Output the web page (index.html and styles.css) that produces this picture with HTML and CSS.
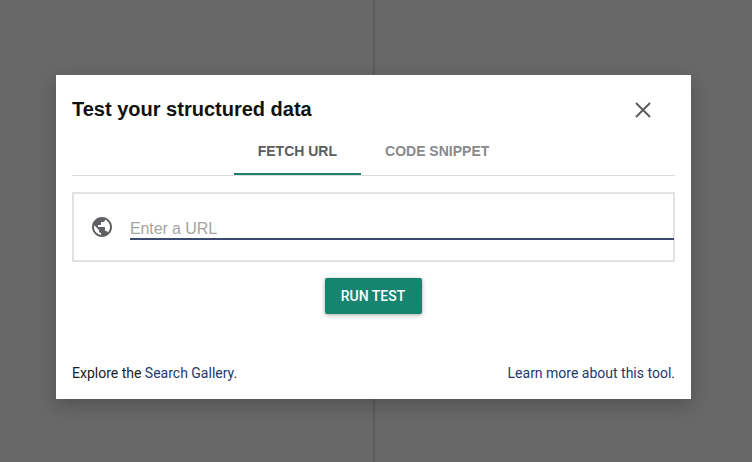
FILE: index.html
```html
<!DOCTYPE html>
<html lang="en">
<head>
    <meta charset="UTF-8">
    <meta name="viewport" content="width=device-width, initial-scale=1.0">
    <title>Test your structured data</title>
    <link rel="stylesheet" href="styles.css">
</head>
<body>
    <div class="dialog">
        <div class="dialog-header">
            <h1>Test your structured data</h1>
            <svg class="close-icon" viewBox="0 0 16 16" width="16" height="16">
                <path d="M1 1L15 15M15 1L1 15" fill="none" stroke="#5a5a5a" stroke-width="1.9"/>
            </svg>
        </div>

        <div class="tabs">
            <div class="tab active">FETCH URL</div>
            <div class="tab">CODE SNIPPET</div>
        </div>

        <div class="url-box">
            <svg class="globe-icon" viewBox="0 0 24 24" width="24" height="24">
                <path fill="#5f6063" d="M12 2C6.48 2 2 6.48 2 12s4.48 10 10 10 10-4.48 10-10S17.52 2 12 2zm-1 17.93c-3.95-.49-7-3.85-7-7.93 0-.62.08-1.21.21-1.79L9 15v1c0 1.1.9 2 2 2v1.93zm6.9-2.54c-.26-.81-1-1.39-1.9-1.39h-1v-3c0-.55-.45-1-1-1H8v-2h2c.55 0 1-.45 1-1V7h2c1.1 0 2-.9 2-2v-.41c2.93 1.19 5 4.06 5 7.41 0 2.08-.8 3.97-2.1 5.39z"/>
            </svg>
            <div class="url-field">Enter a URL</div>
        </div>

        <div class="actions">
            <button>RUN TEST</button>
        </div>

        <div class="dialog-footer">
            <span>Explore the <a href="#">Search Gallery</a>.</span>
            <span><a href="#">Learn more about this tool</a>.</span>
        </div>
    </div>
</body>
</html>
```

FILE: styles.css
```css
* {
    margin: 0;
    padding: 0;
    box-sizing: border-box;
}

html, body {
    height: 462px;
    overflow: hidden;
}

body {
    position: relative;
    background-color: #686868;
    font-family: Roboto, 'Liberation Sans', sans-serif;
    padding: 75px 61px 63px 56px;
}

/* column edge of the page behind the scrim */
body::before {
    content: "";
    position: absolute;
    top: 0;
    bottom: 0;
    left: 373px;
    width: 2px;
    background-color: #5c5c5c;
}

.dialog {
    position: relative;
    height: 324px;
    background-color: #fff;
    padding: 0 16px;
    display: flex;
    flex-direction: column;
    box-shadow: 0 6px 18px rgba(0,0,0,0.22);
}

.dialog-header {
    display: flex;
    justify-content: space-between;
    align-items: center;
    height: 56px;
    padding-top: 12px;
    padding-right: 24px;
}

.dialog-header h1 {
    font-family: 'Liberation Sans', Arial, sans-serif;
    font-size: 20px;
    font-weight: bold;
    color: #111;
}

.close-icon {
    display: block;
    margin-top: 1px;
}

.tabs {
    display: flex;
    justify-content: center;
    height: 45px;
    border-bottom: 1px solid #dcdcdc;
}

.tab {
    padding: 12px 24px 0;
    font-family: 'Liberation Sans', Arial, sans-serif;
    font-size: 14px;
    font-weight: bold;
    color: #8a8a8a;
}

.tab.active {
    color: #5c5c5c;
    height: 44px;
    border-bottom: 2px solid #1d7f70;
}

.url-box {
    display: flex;
    align-items: flex-start;
    height: 70px;
    margin-top: 16px;
    padding: 21px 0 0 16px;
    border: 2px solid #e2e2e2;
}

.globe-icon {
    display: block;
    flex-shrink: 0;
}

.url-field {
    flex: 1;
    height: 22px;
    margin: 3px -1px 0 16px;
    border-bottom: 2px solid #3c4a72;
    font-family: 'Liberation Sans', Arial, sans-serif;
    font-size: 16px;
    letter-spacing: -0.1px;
    line-height: 21px;
    color: #a4a4a4;
}

.actions {
    display: flex;
    justify-content: center;
    margin-top: 16px;
    padding-right: 1px;
}

button {
    width: 97px;
    height: 36px;
    border: none;
    border-radius: 2px;
    background-color: #16846f;
    color: #fff;
    font-family: Roboto, sans-serif;
    font-size: 14px;
    font-weight: 500;
    box-shadow: 0 1px 4px rgba(0,0,0,0.35);
}

.dialog-footer {
    display: flex;
    justify-content: space-between;
    margin-top: 49px;
    font-size: 14px;
    line-height: 20px;
    color: #1c1c1c;
}

.dialog-footer a {
    color: #23386f;
    text-decoration: none;
}
```
